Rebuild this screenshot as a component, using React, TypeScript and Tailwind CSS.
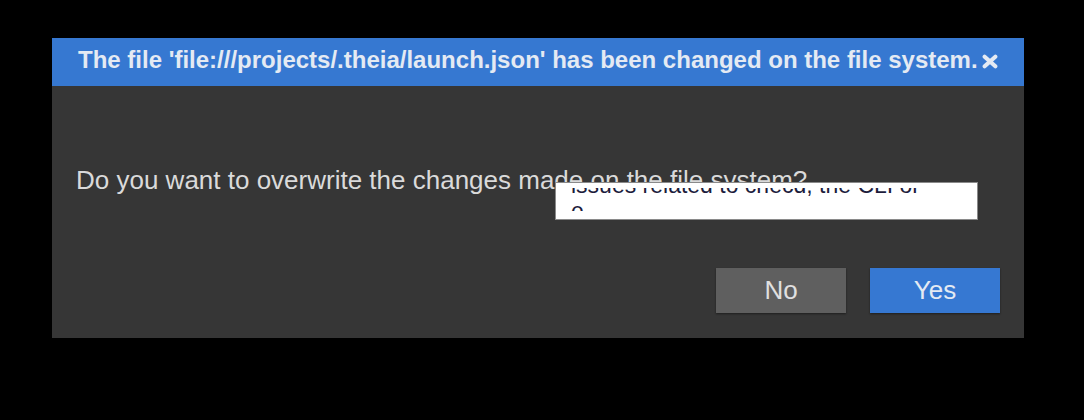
export default function App() {
  return (
    <div
      className="w-full h-[420px] bg-black pt-[38px] pl-[52px]"
      style={{ fontFamily: '"Liberation Sans", Arial, sans-serif' }}
    >
      <div className="relative w-[972px] h-[300px] bg-[#363636] flex flex-col">
        {/* Title bar */}
        <div className="h-[48px] shrink-0 bg-[#3678d1] flex items-start pt-[8px] pl-[26px] text-[#e4eaf3] text-[24px] leading-[28px] font-bold">
          <span className="whitespace-nowrap">
            The file 'file:///projects/.theia/launch.json' has been changed on the file system.
          </span>
          <svg viewBox="0 0 16 14" className="w-[18px] h-[15px] ml-[3px] mt-[8px] shrink-0">
            <path d="M3 2.5 L13 11.5 M13 2.5 L3 11.5" stroke="#e4eaf3" strokeWidth="3.8" strokeLinecap="round" />
          </svg>
        </div>

        {/* Message */}
        <div className="pl-[24px] pt-[79px] text-[26px] leading-[30px] text-[#dadada] whitespace-nowrap">
          Do you want to overwrite the changes made on the file system?
        </div>

        {/* Buttons */}
        <div className="flex justify-end gap-[24px] pr-[24px] mt-auto mb-[25px]">
          <button className="w-[130px] h-[45px] bg-[#5f5f5f] text-[#e0e0e0] text-[26px] leading-[30px] pb-[2px] shadow-[0_1px_2px_rgba(0,0,0,0.45)]">
            No
          </button>
          <button className="w-[130px] h-[45px] bg-[#3678d2] text-[#e4eaf3] text-[26px] leading-[30px] pb-[2px] shadow-[0_1px_2px_rgba(0,0,0,0.45)]">
            Yes
          </button>
        </div>

        {/* Overlaid hover box */}
        <div className="absolute left-[503px] top-[144px] w-[423px] h-[38px] bg-white border border-[#8a8a8a] pt-[5px]">
          <div className="h-[23px] overflow-hidden pl-[15px]">
            <div className="-mt-[16px] text-[23px] leading-[26px] text-[#1c1c3c] whitespace-nowrap">
              issues related to checd, the CLI or
              <br />
              e.
            </div>
          </div>
        </div>
      </div>
    </div>
  );
}
